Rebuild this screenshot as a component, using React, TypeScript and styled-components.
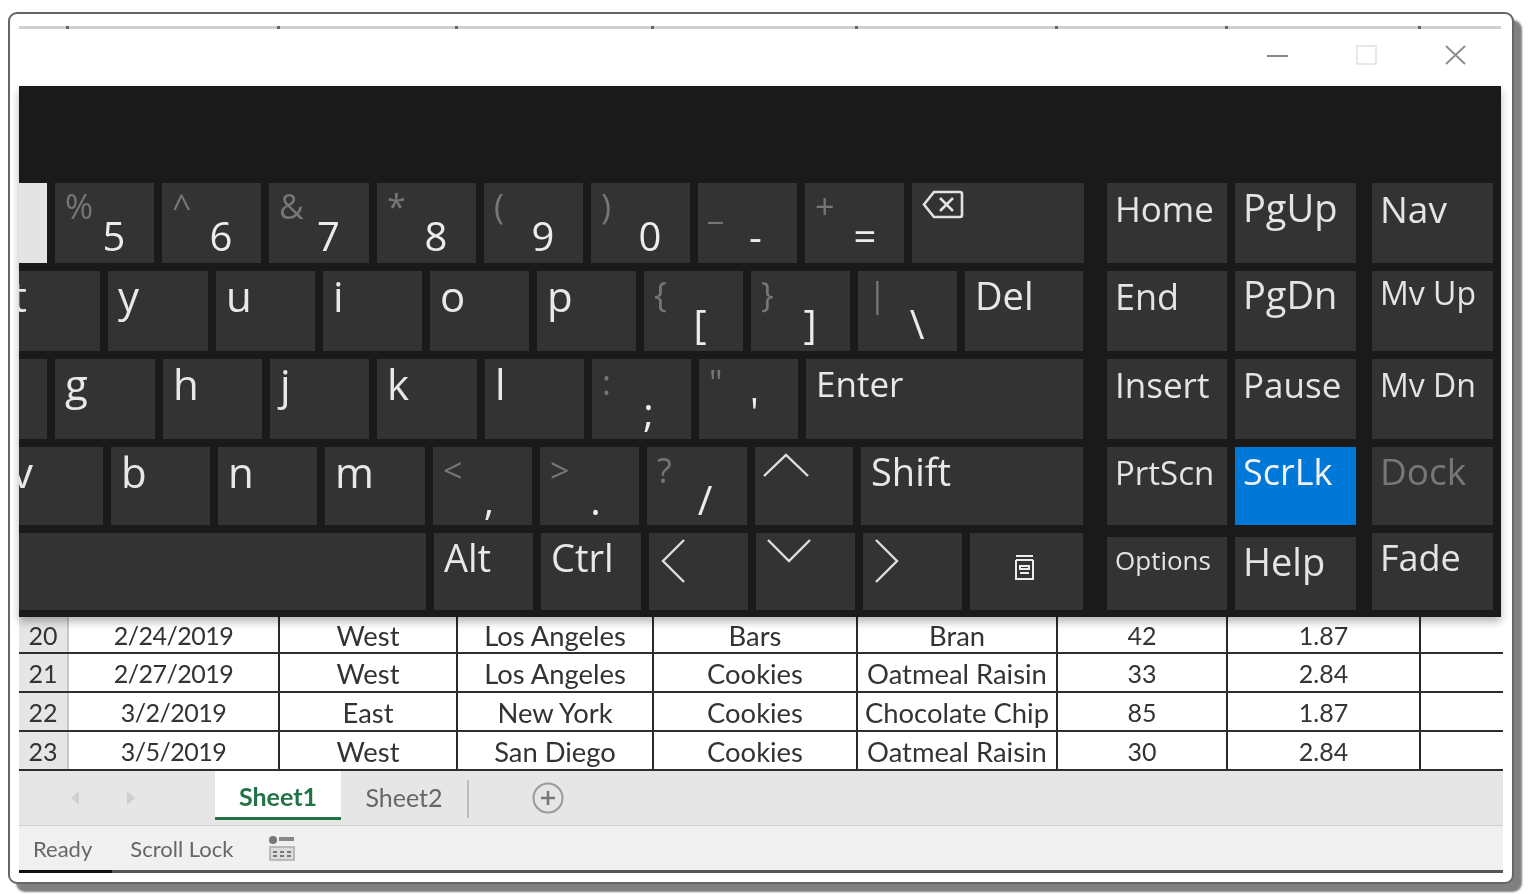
import React, { FC } from 'react'
import styled, { createGlobalStyle } from 'styled-components'

const GRID = '50px 211px 178px 196px 204px 200px 170px 193px 1fr'

type KeyDef = {
  w: number
  label?: string
  sym?: string
  main?: string
  shift?: number
  size?: number
  letter?: boolean
  bleed?: boolean
  light?: boolean
  icon?: React.ReactNode
  ix?: number
  iy?: number
}

const Chevron: FC<{ d: string; w: number; h: number }> = ({ d, w, h }) => (
  <svg width={w} height={h} viewBox={`0 0 ${w} ${h}`} fill="none" stroke="#dedede" strokeWidth="2.4">
    <path d={d} />
  </svg>
)

const Backspace = () => (
  <svg width="42" height="32" viewBox="0 0 42 32" fill="none" stroke="#e2e2e2" strokeWidth="2.6">
    <path d="M12 3h26a2 2 0 0 1 2 2v21a2 2 0 0 1-2 2H12L2 15.5z" />
    <path d="M18 9l13 13M31 9L18 22" />
  </svg>
)

const MenuIcon = () => (
  <svg width="21" height="26" viewBox="0 0 21 26" fill="none" stroke="#ececec" strokeWidth="2">
    <path d="M2 1h17M2 5h17M2 5v19h17V5" />
    <path d="M6 11h9v3H6zM6 18h9" />
  </svg>
)

const row1: KeyDef[] = [
  { w: 28, light: true },
  { w: 99, sym: '%', main: '5' },
  { w: 99, sym: '^', main: '6' },
  { w: 100, sym: '&', main: '7' },
  { w: 99, sym: '*', main: '8' },
  { w: 99, sym: '(', main: '9' },
  { w: 99, sym: ')', main: '0' },
  { w: 99, sym: '_', main: '-', shift: -3 },
  { w: 99, sym: '+', main: '=', shift: 2 },
  { w: 172, icon: <Backspace />, ix: 2 },
]
const row2: KeyDef[] = [
  { w: 81, label: 't', letter: true, bleed: true },
  { w: 100, label: 'y', letter: true },
  { w: 99, label: 'u', letter: true },
  { w: 99, label: 'i', letter: true },
  { w: 99, label: 'o', letter: true },
  { w: 99, label: 'p', letter: true },
  { w: 99, sym: '{', main: '[', shift: -6 },
  { w: 99, sym: '}', main: ']' },
  { w: 99, sym: '|', main: '\\' },
  { w: 118, label: 'Del' },
]
const row3: KeyDef[] = [
  { w: 28 },
  { w: 100, label: 'g', letter: true },
  { w: 99, label: 'h', letter: true },
  { w: 99, label: 'j', letter: true },
  { w: 100, label: 'k', letter: true },
  { w: 99, label: 'l', letter: true },
  { w: 99, sym: ':', main: ';', shift: -5 },
  { w: 99, sym: '"', main: "'", shift: -7 },
  { w: 277, label: 'Enter', size: 35 },
]
const row4: KeyDef[] = [
  { w: 84, label: 'v', letter: true, bleed: true },
  { w: 99, label: 'b', letter: true },
  { w: 99, label: 'n', letter: true },
  { w: 100, label: 'm', letter: true },
  { w: 99, sym: '<', main: ',', shift: -6 },
  { w: 99, sym: '>', main: '.', shift: -7 },
  { w: 100, sym: '?', main: '/', shift: -3 },
  { w: 98, icon: <Chevron w={46} h={24} d="M1 23L23 2l22 21" /> },
  { w: 222, label: 'Shift' },
]
const row5: KeyDef[] = [
  { w: 407 },
  { w: 99, label: 'Alt' },
  { w: 100, label: 'Ctrl' },
  { w: 99, icon: <Chevron w={24} h={44} d="M23 1L2 22l21 21" />, ix: 4 },
  { w: 99, icon: <Chevron w={44} h={24} d="M1 1l21 21L43 1" />, ix: 3 },
  { w: 99, icon: <Chevron w={24} h={44} d="M1 1l21 21L1 43" />, ix: 4 },
  { w: 113, icon: <MenuIcon />, ix: 36, iy: 16 },
]

const mainRows = [
  { h: 80, keys: row1 },
  { h: 80, keys: row2 },
  { h: 80, keys: row3 },
  { h: 78, keys: row4 },
  { h: 77, keys: row5 },
]

type NavDef = { label: string; size: number; dim?: boolean; active?: boolean; low?: boolean; line?: number }

const navRows: { h: number; keys: NavDef[] }[] = [
  { h: 80, keys: [{ label: 'Home', size: 35 }, { label: 'PgUp', size: 38, line: 48 }, { label: 'Nav', size: 37, line: 51 }] },
  { h: 80, keys: [{ label: 'End', size: 36 }, { label: 'PgDn', size: 38, line: 47 }, { label: 'Mv Up', size: 32, line: 44 }] },
  { h: 80, keys: [{ label: 'Insert', size: 35 }, { label: 'Pause', size: 35 }, { label: 'Mv Dn', size: 32 }] },
  { h: 78, keys: [{ label: 'PrtScn', size: 33 }, { label: 'ScrLk', size: 36, active: true, line: 50 }, { label: 'Dock', size: 37, dim: true, line: 47 }] },
  { h: 77, keys: [{ label: 'Options', size: 26, low: true, line: 46 }, { label: 'Help', size: 38, low: true, line: 48 }, { label: 'Fade', size: 36, line: 50 }] },
]

const tableRows = [
  ['20', '2/24/2019', 'West', 'Los Angeles', 'Bars', 'Bran', '42', '1.87', ''],
  ['21', '2/27/2019', 'West', 'Los Angeles', 'Cookies', 'Oatmeal Raisin', '33', '2.84', ''],
  ['22', '3/2/2019', 'East', 'New York', 'Cookies', 'Chocolate Chip', '85', '1.87', ''],
  ['23', '3/5/2019', 'West', 'San Diego', 'Cookies', 'Oatmeal Raisin', '30', '2.84', ''],
]

const NUMERIC = [0, 1, 6, 7]

const Key: FC<{ def: KeyDef }> = ({ def }) => {
  if (def.sym) {
    return (
      <KeyBox $w={def.w}>
        <Sym>{def.sym}</Sym>
        <MainChar $shift={def.shift ?? 0}>{def.main}</MainChar>
      </KeyBox>
    )
  }
  return (
    <KeyBox $w={def.w} $light={def.light} $clip={def.bleed}>
      {def.icon ? (
        <IconSlot $x={def.ix ?? 0} $y={def.iy ?? 0}>
          {def.icon}
        </IconSlot>
      ) : (
        def.label && (
          <Label $letter={def.letter} $bleed={def.bleed} $size={def.size}>
            {def.label}
          </Label>
        )
      )}
    </KeyBox>
  )
}

const App: FC = () => (
  <>
    <GlobalStyle />
    <Frame>
      <TopRule>
        {Array.from({ length: 8 }).map((_, i) => (
          <Tick key={i} />
        ))}
      </TopRule>
      <TitleBar>
        <svg width="21" height="20" viewBox="0 0 21 20" stroke="#888" strokeWidth="2">
          <path d="M0 11h21" />
        </svg>
        <svg width="21" height="20" viewBox="0 0 21 20" fill="none" stroke="#e8e8e8" strokeWidth="2">
          <rect x="1" y="1" width="19" height="18" />
        </svg>
        <svg width="21" height="20" viewBox="0 0 21 20" stroke="#8a8a8a" strokeWidth="1.8">
          <path d="M1 1l19 18M20 1L1 19" />
        </svg>
      </TitleBar>
      <Keyboard>
        <MainKeys>
          {mainRows.map((r, i) => (
            <KeyRow key={i} $h={r.h}>
              {r.keys.map((k, j) => (
                <Key key={j} def={k} />
              ))}
            </KeyRow>
          ))}
        </MainKeys>
        <NavKeys>
          {navRows.map((r, i) => (
            <NavRow key={i} $h={r.h}>
              {r.keys.map((k) => (
                <NavKey key={k.label} $size={k.size} $dim={k.dim} $active={k.active} $low={k.low} $line={k.line}>
                  {k.label}
                </NavKey>
              ))}
            </NavRow>
          ))}
        </NavKeys>
      </Keyboard>
      <Sheet>
        {tableRows.map((row, i) => (
          <SheetRow key={i} $first={i === 0}>
            {row.map((cell, j) => (
              <Cell key={j} $head={j === 0} $num={NUMERIC.includes(j)} $date={j === 1}>
                {cell}
              </Cell>
            ))}
          </SheetRow>
        ))}
      </Sheet>
      <TabBar>
        <TabArrows>
          <TabArrow $left />
          <TabArrow />
        </TabArrows>
        <ActiveTab>Sheet1</ActiveTab>
        <Tab>Sheet2</Tab>
        <TabSep />
        <AddSheet>
          <svg width="32" height="32" viewBox="0 0 32 32" fill="none" stroke="#777" strokeWidth="2">
            <circle cx="16" cy="16" r="14.5" stroke="#999" />
            <path d="M16 9v14M9 16h14" strokeWidth="2.6" />
          </svg>
        </AddSheet>
      </TabBar>
      <StatusBar>
        <StatusText>Ready</StatusText>
        <StatusText>Scroll Lock</StatusText>
        <MacroIcon width="27" height="26" viewBox="0 0 27 26" fill="none">
          <circle cx="5" cy="5" r="4" fill="#777" />
          <path d="M11 4h15" stroke="#888" strokeWidth="4" />
          <path d="M2 12h24v13H2z" fill="#ddd" stroke="#aaa" strokeWidth="1.5" />
          <path d="M5 17h4M12 17h4M19 17h4M5 21h4M12 21h4M19 21h4" stroke="#777" strokeWidth="2" />
        </MacroIcon>
      </StatusBar>
      <BottomEdge />
    </Frame>
  </>
)

export default App

const GlobalStyle = createGlobalStyle`
  html, body {
    margin: 0;
    height: 100%;
    background: #fff;
  }
`

const Frame = styled.div`
  box-sizing: border-box;
  width: 1506px;
  height: 872px;
  margin: 12px 0 0 8px;
  padding: 12px 11px 9px 9px;
  background: #fff;
  border: 2px solid #666;
  border-radius: 9px;
  box-shadow: 8px 8px 2px 0 #808080;
  filter: blur(0.6px);
  font-family: 'Open Sans', sans-serif;
`

const TopRule = styled.div`
  display: grid;
  grid-template-columns: ${GRID};
  height: 3px;
  background: #cfcfcf;
`

const Tick = styled.span`
  border-right: 3px solid #666;
`

const TitleBar = styled.div`
  display: flex;
  justify-content: flex-end;
  align-items: center;
  gap: 68px;
  height: 57px;
  padding-right: 35px;
  background: #fff;
  svg { margin-top: -5px; }
`

const Keyboard = styled.div`
  position: relative;
  z-index: 1;
  display: flex;
  gap: 24px;
  height: 531px;
  box-sizing: border-box;
  padding: 97px 8px 0 0;
  background: #1a1a1a;
  box-shadow: 0 5px 8px rgba(0, 0, 0, 0.28);
`

const MainKeys = styled.div`
  display: flex;
  flex-direction: column;
  gap: 8px;
  width: 1064px;
`

const KeyRow = styled.div<{ $h: number }>`
  display: flex;
  gap: 8px;
  height: ${(p) => p.$h}px;
`

const KeyBox = styled.div<{ $w: number; $light?: boolean; $clip?: boolean }>`
  box-sizing: border-box;
  flex: none;
  width: ${(p) => p.$w}px;
  padding: 8px 8px 0;
  background: ${(p) => (p.$light ? '#e4e4e4' : '#333')};
  overflow: ${(p) => (p.$clip ? 'hidden' : 'visible')};
`

const Sym = styled.div`
  height: 30px;
  padding-left: 2px;
  font-size: 34px;
  line-height: 30px;
  color: #767676;
`

const MainChar = styled.div<{ $shift: number }>`
  padding-left: ${(p) => 19 + p.$shift}px;
  text-align: center;
  font-size: 40px;
  line-height: 30px;
  color: #ececec;
`

const Label = styled.div<{ $letter?: boolean; $bleed?: boolean; $size?: number }>`
  margin-left: ${(p) => (p.$bleed ? -15 : 2)}px;
  margin-top: -8px;
  font-size: ${(p) => p.$size ?? (p.$letter ? 42 : 38)}px;
  line-height: ${(p) => (p.$letter ? 50 : 49)}px;
  color: #e8e8e8;
`

const IconSlot = styled.div<{ $x: number; $y: number }>`
  display: flex;
  margin: ${(p) => p.$y - 2}px 0 0 ${(p) => p.$x}px;
`

const NavKeys = styled.div`
  display: flex;
  flex-direction: column;
  gap: 8px;
  flex: 1;
`

const NavRow = styled.div<{ $h: number }>`
  display: grid;
  grid-template-columns: 120px 121px 129px;
  column-gap: 8px;
  height: ${(p) => p.$h}px;
  & > :last-child { margin-left: 8px; }
`

const NavKey = styled.div<{ $size: number; $dim?: boolean; $active?: boolean; $low?: boolean; $line?: number }>`
  box-sizing: border-box;
  padding-left: 8px;
  margin-top: ${(p) => (p.$low ? 4 : 0)}px;
  background: ${(p) => (p.$active ? '#0078d7' : '#333')};
  color: ${(p) => (p.$dim ? '#777' : p.$active ? '#f2f2f2' : '#e4e4e4')};
  font-size: ${(p) => p.$size}px;
  line-height: ${(p) => p.$line ?? 51}px;
  white-space: nowrap;
`

const Sheet = styled.div`
  display: flex;
  flex-direction: column;
  margin-right: -2px;
  font-family: Lato, 'Open Sans', sans-serif;
`

const SheetRow = styled.div<{ $first?: boolean }>`
  display: grid;
  grid-template-columns: ${GRID};
  height: ${(p) => (p.$first ? 37 : 39)}px;
  box-sizing: border-box;
  border-bottom: 2px solid #2e2e2e;
`

const Cell = styled.div<{ $head?: boolean; $num?: boolean; $date?: boolean }>`
  display: flex;
  align-items: center;
  justify-content: center;
  padding-top: 1px;
  border-right: 2px solid ${(p) => (p.$head ? '#c8c8c8' : '#2a2a2a')};
  background: ${(p) => (p.$head ? '#e6e6e6' : '#fff')};
  color: #333;
  font-size: ${(p) => (p.$num ? 25 : 27.4)}px;
  letter-spacing: ${(p) => (p.$date ? -0.5 : 0)}px;
  white-space: nowrap;
  &:last-child { border-right: none; }
`

const TabBar = styled.div`
  display: flex;
  align-items: flex-start;
  height: 55px;
  margin-right: -2px;
  background: #e6e6e6;
  border-bottom: 1px solid #cfcfcf;
  box-sizing: border-box;
  font-family: Lato, 'Open Sans', sans-serif;
  font-size: 25px;
`

const TabArrows = styled.div`
  display: flex;
  align-items: center;
  gap: 48px;
  width: 196px;
  height: 54px;
  padding-left: 52px;
  box-sizing: border-box;
`

const TabArrow = styled.span<{ $left?: boolean }>`
  width: 0;
  height: 0;
  border-top: 7px solid transparent;
  border-bottom: 7px solid transparent;
  border-${(p) => (p.$left ? 'right' : 'left')}: 8px solid #cfcfcf;
`

const ActiveTab = styled.div`
  box-sizing: border-box;
  width: 126px;
  height: 49px;
  text-align: center;
  line-height: 50px;
  background: #fff;
  border-bottom: 3px solid #217346;
  color: #217346;
  font-weight: 700;
`

const Tab = styled.div`
  width: 126px;
  text-align: center;
  line-height: 52px;
  color: #666;
`

const TabSep = styled.span`
  width: 2px;
  height: 38px;
  margin-top: 9px;
  background: #bdbdbd;
`

const AddSheet = styled.div`
  display: flex;
  margin: 11px 0 0 63px;
`

const StatusBar = styled.div`
  display: flex;
  align-items: center;
  gap: 38px;
  height: 44px;
  margin-right: -2px;
  padding-left: 14px;
  box-sizing: border-box;
  background: #f0f0f0;
  font-family: Lato, 'Open Sans', sans-serif;
`

const StatusText = styled.span`
  font-size: 22px;
  color: #666;
`

const MacroIcon = styled.svg`
  margin-left: -3px;
`

const BottomEdge = styled.div`
  height: 3px;
  margin-right: -2px;
  background: linear-gradient(to right, #111 0, #111 93px, #555 93px, #555 100%);
`
